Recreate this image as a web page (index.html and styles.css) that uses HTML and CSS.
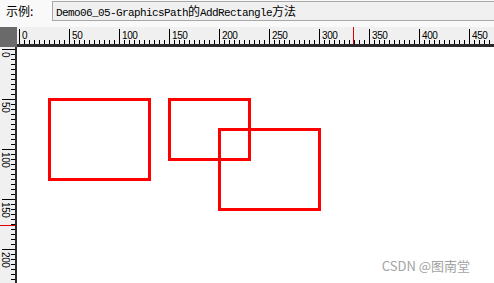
FILE: index.html
```html
<!DOCTYPE html>
<html>
<head>
<meta charset="utf-8">
<link rel="stylesheet" href="styles.css">
</head>
<body>
<div class="app">
  <div class="topbar">
    <span class="label">示例:</span>
    <div class="textbox"><span>Demo06_05-GraphicsPath</span><span class="cjk">的</span><span>AddRectangle</span><span class="cjk">方法</span></div>
  </div>
  <div class="workspace">
    <div class="corner"></div>
    <svg class="hruler" width="477" height="20" viewBox="0 0 477 20">
      <defs>
        <pattern id="hticks" x="2" y="0" width="5" height="20" patternUnits="userSpaceOnUse">
          <rect x="0" y="13" width="1" height="4" fill="#000"/>
        </pattern>
      </defs>
      <rect x="0" y="0" width="477" height="17" fill="#f0f0f0"/>
      <rect x="2" y="0" width="475" height="17" fill="url(#hticks)"/>
      <g fill="#000">
        <rect x="2" y="2" width="1" height="15"/>
        <rect x="52" y="2" width="1" height="15"/>
        <rect x="102" y="2" width="1" height="15"/>
        <rect x="152" y="2" width="1" height="15"/>
        <rect x="202" y="2" width="1" height="15"/>
        <rect x="252" y="2" width="1" height="15"/>
        <rect x="302" y="2" width="1" height="15"/>
        <rect x="352" y="2" width="1" height="15"/>
        <rect x="402" y="2" width="1" height="15"/>
        <rect x="452" y="2" width="1" height="15"/>
      </g>
      <rect x="336" y="0" width="1" height="17" fill="#e00000"/>
      <g class="rtext">
        <text x="5" y="12">0</text>
        <text x="55" y="12">50</text>
        <text x="105" y="12">100</text>
        <text x="155" y="12">150</text>
        <text x="205" y="12">200</text>
        <text x="255" y="12">250</text>
        <text x="305" y="12">300</text>
        <text x="355" y="12">350</text>
        <text x="405" y="12">400</text>
        <text x="455" y="12">450</text>
      </g>
      <rect x="0" y="17" width="477" height="3" fill="#2b2b2b"/>
    </svg>
    <svg class="vruler" width="17" height="236" viewBox="0 0 17 236">
      <defs>
        <pattern id="vticks" x="0" y="2" width="17" height="5" patternUnits="userSpaceOnUse">
          <rect x="11" y="0" width="4" height="1" fill="#000"/>
        </pattern>
      </defs>
      <rect x="0" y="0" width="15" height="236" fill="#f0f0f0"/>
      <rect x="0" y="2" width="15" height="234" fill="url(#vticks)"/>
      <g fill="#000">
        <rect x="2" y="2" width="13" height="1"/>
        <rect x="2" y="52" width="13" height="1"/>
        <rect x="2" y="102" width="13" height="1"/>
        <rect x="2" y="152" width="13" height="1"/>
        <rect x="2" y="202" width="13" height="1"/>
      </g>
      <rect x="0" y="178" width="15" height="1" fill="#e00000"/>
      <g class="rtext">
        <text transform="translate(2,5) rotate(90)">0</text>
        <text transform="translate(2,55) rotate(90)">50</text>
        <text transform="translate(2,105) rotate(90)">100</text>
        <text transform="translate(2,155) rotate(90)">150</text>
        <text transform="translate(2,205) rotate(90)">200</text>
      </g>
      <rect x="15" y="0" width="2" height="236" fill="#2b2b2b"/>
    </svg>
    <div class="canvas">
      <svg width="477" height="236" viewBox="0 0 477 236">
        <g fill="none" stroke="#ff0000" stroke-width="3">
          <rect x="32.5" y="52.5" width="100" height="80"/>
          <rect x="152.5" y="52.5" width="80" height="60"/>
          <rect x="202.5" y="82.5" width="100" height="80"/>
        </g>
      </svg>
      <div class="watermark">CSDN @图南堂</div>
    </div>
  </div>
</div>
</body>
</html>
```
FILE: styles.css
```css
html, body {
  margin: 0;
  padding: 0;
  width: 494px;
  height: 283px;
  overflow: hidden;
  background: #f9f9f9;
}
.app {
  display: flex;
  flex-direction: column;
  width: 494px;
  height: 283px;
}
.topbar {
  height: 27px;
  display: flex;
  align-items: flex-start;
  gap: 0;
  box-sizing: border-box;
}
.label {
  font-family: "Noto Sans CJK SC", sans-serif;
  font-size: 12px;
  line-height: 16px;
  margin: 3px 0 0 6px;
  width: 46px;
  color: #000;
}
.textbox {
  margin-top: 1px;
  flex: 1;
  height: 20px;
  box-sizing: border-box;
  border: 1px solid #a8a8a8;
  border-right: none;
  background: #f0f0f0;
  padding-left: 3px;
  font-family: "Liberation Mono", monospace;
  font-size: 11px;
  letter-spacing: -0.6px;
  line-height: 18px;
  color: #000;
  white-space: nowrap;
  overflow: hidden;
}
.textbox .cjk {
  font-family: "Noto Sans CJK SC", sans-serif;
  font-size: 12px;
  letter-spacing: 0;
}
.workspace {
  flex: 1;
  display: grid;
  grid-template-columns: 17px 477px;
  grid-template-rows: 20px 236px;
}
.corner {
  background: #6a6a6a;
}
.hruler, .vruler {
  display: block;
}
.rtext text {
  font-family: "Liberation Sans", sans-serif;
  font-size: 10px;
  letter-spacing: -0.4px;
  fill: #000;
}
.canvas {
  position: relative;
  background: #ffffff;
  overflow: hidden;
}
.canvas svg {
  display: block;
}
.watermark {
  position: absolute;
  right: 24px;
  bottom: 9px;
  font-family: "Noto Sans CJK SC", sans-serif;
  font-size: 13px;
  line-height: 16px;
  color: #a3a3a3;
  white-space: nowrap;
}
```
